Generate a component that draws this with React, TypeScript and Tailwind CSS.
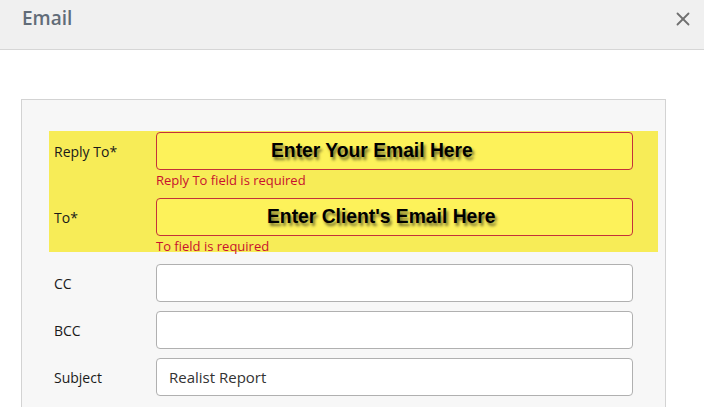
import { X } from "lucide-react";

const sans = "font-['Open_Sans',_'Noto_Sans',_sans-serif]";

function Field({
  label,
  value,
  invalid,
  hint,
}: {
  label: string;
  value?: string;
  invalid?: boolean;
  hint?: string;
}) {
  return (
    <div className="flex items-center pl-[5px]">
      <div className="w-[102px] text-[14px] text-[#1a1a1a]">{label}</div>
      <div
        className={
          invalid
            ? "relative flex h-[38px] w-[477px] items-center rounded-[4px] border border-[#c4313a] bg-[#fdf25a]"
            : "flex h-[38px] w-[477px] items-center rounded-[4px] border border-[#b0b0b0] bg-white px-3 text-[15px] text-[#333]"
        }
      >
        {hint ? (
          <span
            className="absolute top-[6px] font-['Liberation_Sans',_Arial,_sans-serif] text-[19.3px] font-bold leading-[24px] text-black [text-shadow:2px_3px_3px_rgba(0,0,0,0.55)]"
            style={{ left: hint.startsWith("Enter Your") ? 114 : 110 }}
          >
            {hint}
          </span>
        ) : (
          value
        )}
      </div>
    </div>
  );
}

function Error({ text }: { text: string }) {
  return (
    <div className="h-[28px] pl-[107px] pt-[1px] text-[13px] leading-[18px] text-[#c8102e]">
      {text}
    </div>
  );
}

export default function App() {
  return (
    <div className={`h-[407px] w-[704px] overflow-hidden bg-white ${sans}`}>
      <header className="flex h-[50px] items-start justify-between border-b border-[#d6d6d6] bg-[#f0f0f0] pl-[22px] pr-[10px] pt-[4px]">
        <h1 className="text-[19px] font-semibold leading-[28px] text-[#616c78]">Email</h1>
        <X className="mt-[4px] h-[22px] w-[22px] text-[#707070]" strokeWidth={2} />
      </header>

      <div className="ml-[21px] mt-[49px] w-[645px] border border-[#d3d3d3] bg-[#f7f7f7] pl-[27px] pt-[31px] pb-[20px]">
        <div className="h-[121px] w-[609px] bg-[#f7ec57] pt-[1px]">
          <Field label="Reply To*" invalid hint="Enter Your Email Here" />
          <Error text="Reply To field is required" />
          <Field label="To*" invalid hint="Enter Client's Email Here" />
          <Error text="To field is required" />
        </div>
        <div className="mt-[12px] flex flex-col gap-[9px]">
          <Field label="CC" />
          <Field label="BCC" />
          <Field label="Subject" value="Realist Report" />
        </div>
      </div>
    </div>
  );
}
